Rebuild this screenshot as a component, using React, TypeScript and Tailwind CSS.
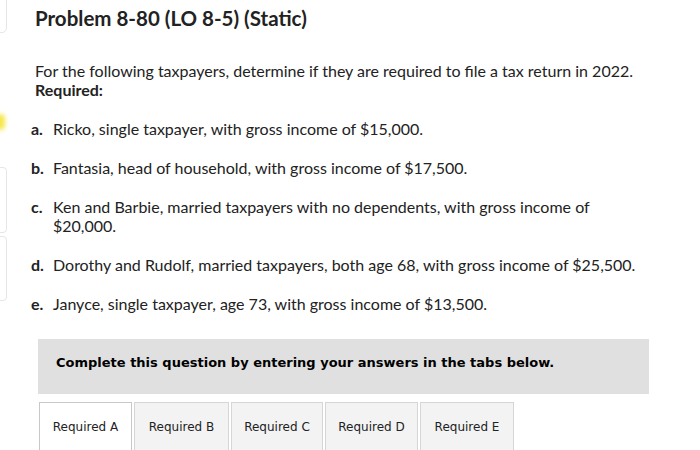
import React from "react";

const items: [string, React.ReactNode][] = [
  ["a.", "Ricko, single taxpayer, with gross income of $15,000."],
  ["b.", "Fantasia, head of household, with gross income of $17,500."],
  ["c.", <>Ken and Barbie, married taxpayers with no dependents, with gross income of<br />$20,000.</>],
  ["d.", "Dorothy and Rudolf, married taxpayers, both age 68, with gross income of $25,500."],
  ["e.", "Janyce, single taxpayer, age 73, with gross income of $13,500."],
];

const tabs = ["Required A", "Required B", "Required C", "Required D", "Required E"];
const tabW = ["w-[93px]", "w-[95px]", "w-[92px]", "w-[93px]", "w-[94px]"];

export default function App() {
  return (
    <div className="relative w-[700px] h-[450px] overflow-hidden bg-white text-[#222]" style={{ fontFamily: "Lato, 'Open Sans', sans-serif" }}>
      <div className="absolute left-[-10px] top-[-10px] w-[17px] h-[43px] rounded-[5px] border border-[#e6e6e6]" />
      <div className="absolute left-[-4px] top-[114px] w-[9px] h-[16px] rounded-full bg-[#f5e84a] blur-[2px]" />
      <div className="absolute left-[-10px] top-[167px] w-[17px] h-[66px] rounded-[4px] border border-[#e6e6e6]" />
      <div className="absolute left-[-10px] top-[236px] w-[17px] h-[65px] rounded-[4px] border border-[#e6e6e6]" />

      <div className="pl-[35px] pt-[5px]">
        <h1 className="text-[20.5px] leading-[26px] font-bold">Problem 8-80 (LO 8-5) (Static)</h1>
        <p className="mt-[30px] text-[16px] leading-[19px]">For the following taxpayers, determine if they are required to file a tax return in 2022.</p>
        <p className="text-[16px] leading-[19px] font-bold">Required:</p>
      </div>

      <ol className="mt-[20px] pl-[31px] flex flex-col gap-[20px] text-[16px] leading-[19px]">
        {items.map(([l, t], i) => (
          <li key={i} className="flex">
            <span className="w-[22px] font-bold shrink-0">{l}</span>
            <span>{t}</span>
          </li>
        ))}
      </ol>

      <div className="ml-[38px] mt-[26px] w-[611px] h-[55px] bg-[#e0e0e0] flex items-center pl-[18px] pb-[8px]">
        <span className="text-[13px] font-bold text-black" style={{ fontFamily: "'DejaVu Sans', Verdana, sans-serif" }}>
          Complete this question by entering your answers in the tabs below.
        </span>
      </div>

      <div className="ml-[39px] mt-[8px] w-[610px] flex gap-[2px] border-b border-[#bdbdbd] text-[12px] text-[#222]" style={{ fontFamily: "'DejaVu Sans', Verdana, sans-serif" }}>
        {tabs.map((t, i) => (
          <div
            key={t}
            className={`${tabW[i]} h-[48px] flex items-center justify-center border border-b-0 ${i === 0 ? "bg-white border-[#c8c8c8] -mb-px h-[49px]" : "bg-[#f3f3f3] border-[#d6d6d6]"}`}
          >
            {t}
          </div>
        ))}
      </div>
    </div>
  );
}
